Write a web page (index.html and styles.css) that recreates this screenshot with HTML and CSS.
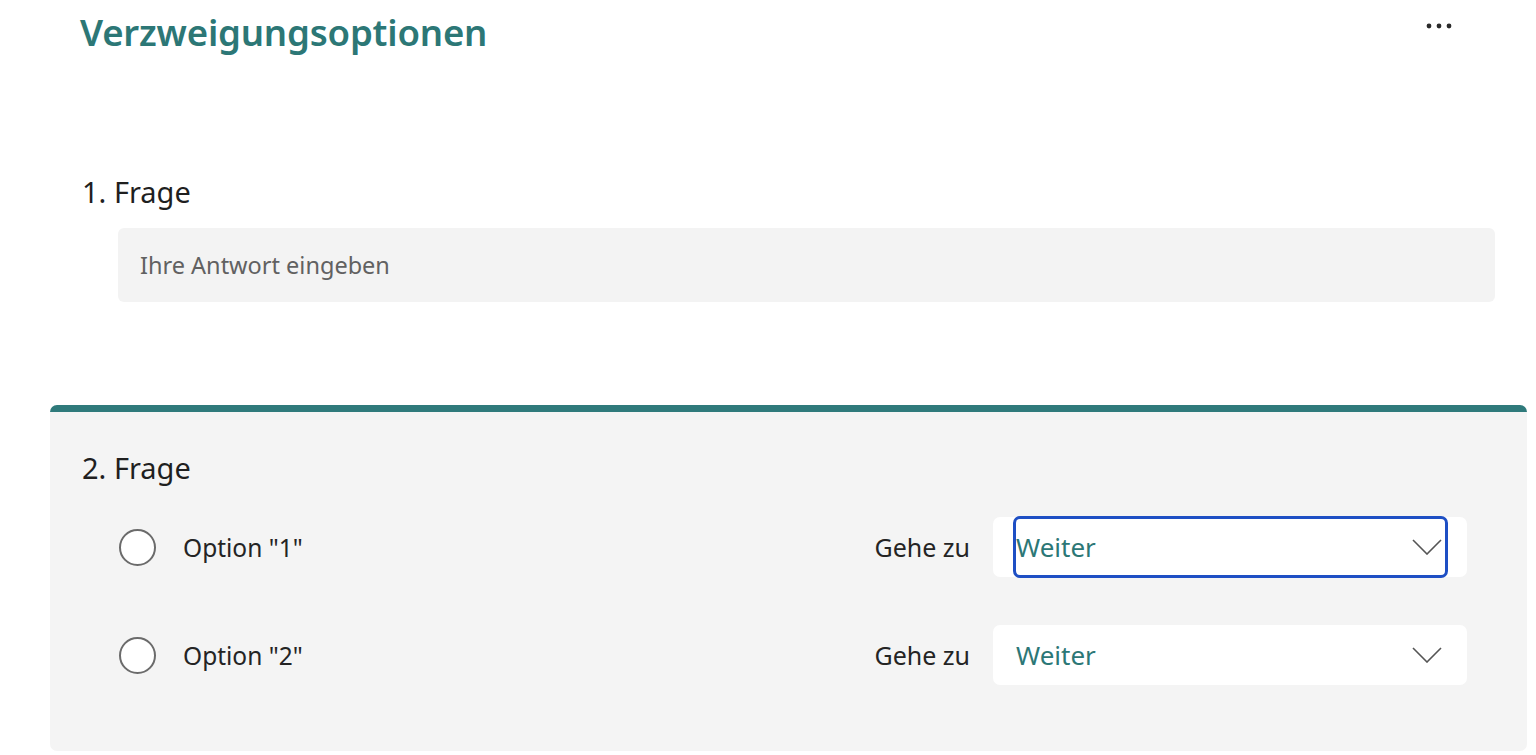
FILE: index.html
```html
<!DOCTYPE html>
<html lang="de">
<head>
    <meta charset="UTF-8">
    <meta name="viewport" content="width=device-width, initial-scale=1.0">
    <title>Verzweigungsoptionen</title>
    <link rel="stylesheet" href="styles.css">
</head>
<body>
    <header class="page-header">
        <h1 class="page-title">Verzweigungsoptionen</h1>
        <button class="more-btn" aria-label="Weitere Optionen">
            <svg width="28" height="6" viewBox="0 0 28 6">
                <circle cx="3" cy="3" r="2.4" fill="#2a2a2a"/>
                <circle cx="13" cy="3" r="2.4" fill="#2a2a2a"/>
                <circle cx="23" cy="3" r="2.4" fill="#2a2a2a"/>
            </svg>
        </button>
    </header>

    <section class="question">
        <div class="question-title">1. Frage</div>
        <div class="text-answer">Ihre Antwort eingeben</div>
    </section>

    <section class="question card">
        <div class="question-title">2. Frage</div>

        <div class="option-row">
            <span class="radio"></span>
            <span class="option-label">Option "1"</span>
            <span class="goto-label">Gehe zu</span>
            <div class="select-box">
                <div class="select focused">
                    <span class="select-value">Weiter</span>
                    <svg class="chevron" width="30" height="16" viewBox="0 0 30 16">
                        <path d="M1 1 L15 15 L29 1" fill="none" stroke="#555" stroke-width="1.6"/>
                    </svg>
                </div>
            </div>
        </div>

        <div class="option-row">
            <span class="radio"></span>
            <span class="option-label">Option "2"</span>
            <span class="goto-label">Gehe zu</span>
            <div class="select-box">
                <div class="select">
                    <span class="select-value">Weiter</span>
                    <svg class="chevron" width="30" height="16" viewBox="0 0 30 16">
                        <path d="M1 1 L15 15 L29 1" fill="none" stroke="#555" stroke-width="1.6"/>
                    </svg>
                </div>
            </div>
        </div>
    </section>
</body>
</html>
```

FILE: styles.css
```css
body {
    margin: 0 0 4px;
    background-color: #fff;
    font-family: "Noto Sans", "Open Sans", sans-serif;
    color: #222;
}

.page-header {
    display: flex;
    justify-content: space-between;
    align-items: center;
    height: 64px;
    padding: 0 82px 0 80px;
}

.page-title {
    margin: 0;
    font-size: 36.6px;
    font-weight: 600;
    color: #2c7776;
    letter-spacing: -0.2px;
}

.more-btn {
    background: none;
    border: none;
    padding: 0;
    margin-top: -16px;
    cursor: pointer;
}

.question {
    padding-top: 110px;
}

.question-title {
    margin-left: 82px;
    font-size: 29px;
    line-height: 36px;
    color: #1f1f1f;
}

.text-answer {
    display: flex;
    align-items: center;
    height: 74px;
    margin: 18px 41px 0 118px;
    padding-left: 22px;
    background-color: #f3f3f3;
    border-radius: 6px;
    font-size: 23.5px;
    color: #616161;
}

.card {
    margin: 103px 9px 0 50px;
    padding: 38px 0 66px;
    background-color: #f4f4f4;
    border-top: 7px solid #2f7a7b;
    border-radius: 7px;
}

.card .question-title {
    margin-left: 32px;
}

.option-row {
    display: flex;
    align-items: center;
    height: 60px;
    margin-top: 48px;
}

.card .question-title + .option-row {
    margin-top: 31px;
}

.radio {
    box-sizing: border-box;
    width: 37px;
    height: 37px;
    margin-left: 69px;
    border: 2px solid #6b6b6b;
    border-radius: 50%;
    background-color: #fff;
}

.option-label {
    margin-left: 27px;
    font-size: 24.5px;
    color: #242424;
    flex: 1;
}

.goto-label {
    margin-right: 23px;
    font-size: 25px;
    color: #242424;
}

.select-box {
    box-sizing: border-box;
    width: 474px;
    height: 60px;
    margin-right: 60px;
    padding: 2px 22px 2px 23px;
    background-color: #fff;
    border-radius: 7px;
}

.select {
    display: flex;
    align-items: center;
    justify-content: space-between;
    height: 56px;
    padding-right: 3px;
    border-radius: 3px;
}

.select.focused {
    outline: 3px solid #1e4fc4;
    border-radius: 4px;
}

.select-value {
    font-size: 26px;
    color: #2c7776;
}

.chevron {
    display: block;
}
```
